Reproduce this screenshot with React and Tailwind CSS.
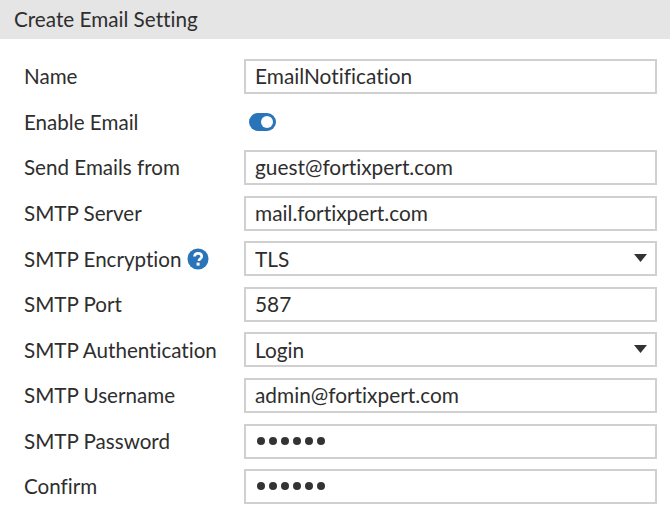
import React from "react";

const inputClass =
    "flex items-center justify-between h-[35px] w-[413px] border-2 border-[#d0d0d0] bg-white pl-[9px] pr-[8px] pb-[1px] text-[20.85px] text-[#2e2e2e]";

function Value({ text }) {
    return <div className={inputClass}>{text}</div>;
}

function Select({ text }) {
    return (
        <div className={inputClass}>
            {text}
            <svg width="13" height="8" viewBox="0 0 13 8">
                <path d="M0 0H13L6.5 8Z" fill="#333333" />
            </svg>
        </div>
    );
}

function Password() {
    return (
        <div className={inputClass}>
            <div className="flex items-center gap-[4px] ml-[2px]">
                {[0, 1, 2, 3, 4, 5].map((i) => (
                    <span key={i} className="block w-[8px] h-[8px] rounded-full bg-[#333333]" />
                ))}
            </div>
        </div>
    );
}

function Row({ label, children }) {
    return (
        <div className="flex items-center h-[35px]">
            <div className="flex items-center w-[220px] shrink-0 pt-[0.6px] text-[#2e2e2e]">{label}</div>
            {children}
        </div>
    );
}

export default function App() {
    return (
        <div className="w-[670px] h-[517px] bg-white font-['Lato',sans-serif] text-[20.6px] [font-variant-ligatures:none] overflow-hidden">
            <div className="flex items-center h-[39px] bg-[#e5e5e5] pl-[14px] text-[20.7px] text-[#2e2e2e]">
                Create Email Setting
            </div>
            <div className="flex flex-col gap-[10.6px] pt-[19.8px] pl-[24px]">
                <Row label="Name">
                    <Value text="EmailNotification" />
                </Row>
                <Row label="Enable Email">
                    <div className="flex items-center justify-end w-[27px] h-[18px] ml-[5px] rounded-full bg-[#2a74b9] pr-[3px]">
                        <span className="block w-[12px] h-[12px] rounded-full bg-white" />
                    </div>
                </Row>
                <Row label="Send Emails from">
                    <Value text="guest@fortixpert.com" />
                </Row>
                <Row label="SMTP Server">
                    <Value text="mail.fortixpert.com" />
                </Row>
                <Row
                    label={
                        <>
                            SMTP Encryption
                            <svg width="22" height="22" viewBox="0 0 22 22" className="ml-[6px]">
                                <circle cx="11" cy="11" r="10.5" fill="#2a74b9" />
                                <path
                                    d="M7.5 8.5C7.7 6.4 9.2 5.4 11.1 5.4C13.2 5.4 14.7 6.6 14.7 8.4C14.7 10.8 11.9 10.9 11.9 13"
                                    fill="none"
                                    stroke="#ffffff"
                                    strokeWidth="2.6"
                                />
                                <rect x="9.6" y="14.6" width="3" height="3" fill="#ffffff" />
                            </svg>
                        </>
                    }
                >
                    <Select text="TLS" />
                </Row>
                <Row label="SMTP Port">
                    <Value text="587" />
                </Row>
                <Row label="SMTP Authentication">
                    <Select text="Login" />
                </Row>
                <Row label="SMTP Username">
                    <Value text="admin@fortixpert.com" />
                </Row>
                <Row label="SMTP Password">
                    <Password />
                </Row>
                <Row label="Confirm">
                    <Password />
                </Row>
            </div>
        </div>
    );
}
